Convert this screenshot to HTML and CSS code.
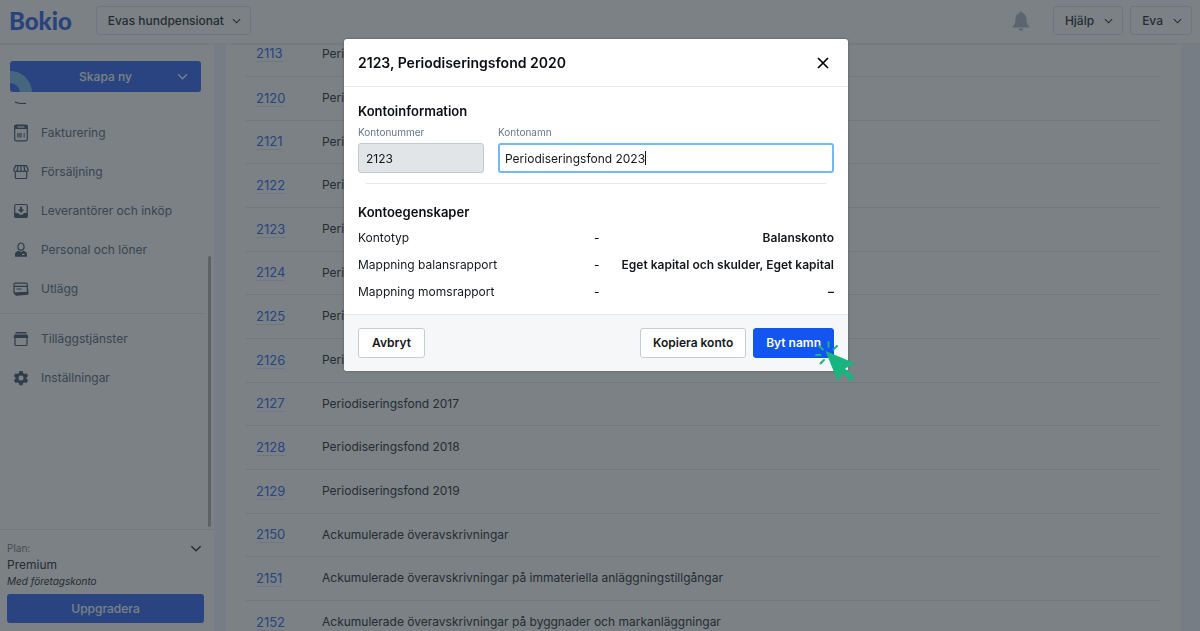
FILE: index.html
```html
<!DOCTYPE html>
<html lang="sv">

<head>
    <meta charset="UTF-8">
    <meta name="viewport" content="width=device-width, initial-scale=1.0">
    <title>Bokio - Kontoplan</title>
    <link rel="stylesheet" href="styles.css">
</head>

<body>

    <header class="topbar">
        <a class="logo" href="#">Bokio</a>
        <button class="top-button company">Evas hundpensionat
            <svg class="chevron" viewBox="0 0 10 6"><path d="M1 1l4 4 4-4" /></svg>
        </button>
        <button class="bell" aria-label="Notiser">
            <svg width="18" height="20" viewBox="0 0 18 20"><path d="M9 .5a1.300 1.300 0 0 1 1.300 1.400C13 2.500 14.500 5 14.500 8c0 4 .8 5.500 2.600 7.200V16.500H.9V15.200C2.700 13.500 3.500 12 3.500 8c0-3 1.500-5.500 4.200-6.100A1.300 1.300 0 0 1 9 .5zM6.800 17.500h4.400a2.200 2.200 0 0 1-4.400 0z" /></svg>
        </button>
        <button class="top-button">Hjälp
            <svg class="chevron" viewBox="0 0 10 6"><path d="M1 1l4 4 4-4" /></svg>
        </button>
        <button class="top-button">Eva
            <svg class="chevron" viewBox="0 0 10 6"><path d="M1 1l4 4 4-4" /></svg>
        </button>
    </header>

    <div class="layout">
        <aside class="sidebar">
            <button class="create">
                <svg class="create-arc" width="24" height="21" viewBox="0 0 24 21"><circle cx="0" cy="22" r="16" /></svg>
                <span>Skapa ny</span>
                <svg class="chevron" viewBox="0 0 10 6"><path d="M1 1l4 4 4-4" /></svg>
            </button>

            <nav class="menu">
                <svg class="cut-icon" width="12" height="4" viewBox="0 0 12 4"><path d="M0 1l5 1.500 6-.2" /></svg>
                <a href="#">
                    <svg viewBox="0 0 16 18"><rect class="line" x="1.700" y="1.200" width="12.600" height="15.600" rx="1.500" /><path d="M1.500 1h13v4h-13z" /><path class="cut" d="M4.500 3h7" /><path class="soft" d="M4 9h5v4.500H4zM10.500 9H12v4.500h-1.500z" /></svg>
                    Fakturering
                </a>
                <a href="#">
                    <svg viewBox="0 0 16 18"><path class="line" d="M2.300 8.500v6a1 1 0 0 0 1 1h9.400a1 1 0 0 0 1-1v-6M2.500 2.700h11l1.700 4.200c0 2.200-3.400 2.200-3.600 0 0 2.200-3.600 2.200-3.600 0 0 2.200-3.600 2.200-3.600 0C4.200 9.100.8 9.100.8 6.900zM5 2.700l-.6 4.200M8 2.700v4.200M11 2.700l.6 4.200" /></svg>
                    Försäljning
                </a>
                <a href="#">
                    <svg viewBox="0 0 16 18"><rect class="line" x="1.700" y="2.500" width="12.600" height="12.800" rx="1.500" /><path d="M1.500 11h3.700c.6 2.400 5 2.400 5.600 0h3.700v4.800h-13zM7 4.800h2v2.700h2.200L8 11 4.800 7.500H7z" /></svg>
                    Leverantörer och inköp
                </a>
                <a href="#">
                    <svg viewBox="0 0 16 18"><path class="line" d="M4.900 6.200c-.3-5.600 6.500-5.600 6.200 0-.3 4-5.900 4-6.200 0z" /><path d="M2 15.800v-2.300c0-2 1.500-3.300 3.600-3.700 1.500 1.200 3.300 1.200 4.800 0 2.100.4 3.600 1.700 3.600 3.700v2.300z" /><path class="cut" d="M9 13.500h2.500" /></svg>
                    Personal och löner
                </a>
                <a href="#">
                    <svg viewBox="0 0 16 18"><path class="line" d="M2 3.200h11a1.300 1.300 0 0 1 1.300 1.300v7.800L2.600 13.500a1.500 1.500 0 0 1-1.600-1.400V4.500a1.300 1.300 0 0 1 1-1.300zM1 6.300h13.300M3.500 9h5" /><path d="M1 12.500l14-.8V7l.6 6.500c0 1-.6 1.300-1.600 1.300l-10 .9c-1.500.1-2.600-.6-3-3.200z" /></svg>
                    Utlägg
                </a>
                <hr>
                <a href="#">
                    <svg viewBox="0 0 16 18"><path d="M2.500 2h11v1.600h-11zM1.500 4.500h13l1 3.500H.5z" /><path class="line" d="M2 7.500v7a1 1 0 0 0 1 1h10a1 1 0 0 0 1-1v-7" /></svg>
                    Tilläggstjänster
                </a>
                <a href="#">
                    <svg viewBox="0 0 16 18"><path fill-rule="evenodd" d="M6.400 2h3.200l.5 2.100 1.300.8 2.100-.7 1.600 2.800L13.500 8.400v1.400l1.600 1.400-1.600 2.800-2.100-.6-1.300.7-.5 2.100H6.400l-.5-2.100-1.300-.7-2.100.6L.9 11.200l1.600-1.400V8.400L.9 7l1.600-2.800 2.100.7 1.300-.8zM8 6.600a2.500 2.500 0 1 0 0 5 2.500 2.500 0 0 0 0-5z" /></svg>
                    Inställningar
                </a>
                <div class="scroll-thumb"></div>
            </nav>

            <section class="plan">
                <div class="plan-head">Plan:
                    <svg class="chevron" viewBox="0 0 10 6"><path d="M1 1l4 4 4-4" /></svg>
                </div>
                <div class="plan-name">Premium</div>
                <em>Med företagskonto</em>
                <button class="upgrade">Uppgradera</button>
            </section>
        </aside>

        <main class="content">
            <table class="accounts">
                <tbody>
                    <tr><td><a href="#">2113</a></td><td>Periodiseringsfond 2013</td></tr>
                    <tr><td><a href="#">2120</a></td><td>Periodiseringsfond 2020</td></tr>
                    <tr><td><a href="#">2121</a></td><td>Periodiseringsfond 2021</td></tr>
                    <tr><td><a href="#">2122</a></td><td>Periodiseringsfond 2022</td></tr>
                    <tr><td><a href="#">2123</a></td><td>Periodiseringsfond 2020</td></tr>
                    <tr><td><a href="#">2124</a></td><td>Periodiseringsfond 2014</td></tr>
                    <tr><td><a href="#">2125</a></td><td>Periodiseringsfond 2015</td></tr>
                    <tr><td><a href="#">2126</a></td><td>Periodiseringsfond 2016</td></tr>
                    <tr><td><a href="#">2127</a></td><td>Periodiseringsfond 2017</td></tr>
                    <tr><td><a href="#">2128</a></td><td>Periodiseringsfond 2018</td></tr>
                    <tr><td><a href="#">2129</a></td><td>Periodiseringsfond 2019</td></tr>
                    <tr><td><a href="#">2150</a></td><td>Ackumulerade överavskrivningar</td></tr>
                    <tr><td><a href="#">2151</a></td><td>Ackumulerade överavskrivningar på immateriella anläggningstillgångar</td></tr>
                    <tr><td><a href="#">2152</a></td><td>Ackumulerade överavskrivningar på byggnader och markanläggningar</td></tr>
                </tbody>
            </table>
        </main>
    </div>

    <div class="modal-overlay">
        <form class="modal" role="dialog" aria-labelledby="modalTitle">
            <div class="modal-header">
                <h1 id="modalTitle">2123, Periodiseringsfond 2020</h1>
                <button type="button" class="close-modal" aria-label="Stäng">
                    <svg width="12" height="12" viewBox="0 0 12 12"><path d="M1 1l10 10M11 1L1 11" /></svg>
                </button>
            </div>

            <div class="modal-body">
                <h2>Kontoinformation</h2>
                <div class="fields">
                    <div class="field">
                        <label for="kontonummer">Kontonummer</label>
                        <input type="text" id="kontonummer" value="2123" disabled>
                    </div>
                    <div class="field">
                        <label for="kontonamn">Kontonamn</label>
                        <input type="text" id="kontonamn" class="active" value="Periodiseringsfond 2023">
                        <span class="caret"></span>
                    </div>
                </div>
                <hr>
                <h2>Kontoegenskaper</h2>
                <div class="property"><span>Kontotyp</span><span>-</span><b>Balanskonto</b></div>
                <div class="property"><span>Mappning balansrapport</span><span>-</span><b>Eget kapital och skulder, Eget kapital</b></div>
                <div class="property"><span>Mappning momsrapport</span><span>-</span><b>–</b></div>
            </div>

            <div class="modal-footer">
                <button type="button">Avbryt</button>
                <button type="button" class="copy">Kopiera konto</button>
                <button type="submit" class="primary">Byt namn</button>
                <svg class="pointer" width="42" height="42" viewBox="0 0 42 42">
                    <path class="rays" d="M14.500 2v5M23 6l-3.500 3.500M2 15h4.500M6.500 23.500l3.500-3.500M5 6l4 3.500" />
                    <path d="M11.500 11l30 12.500-10.500 5 9.500 8.500-4 4-8.500-8.500-4 9.500z" />
                </svg>
            </div>
        </form>
    </div>

</body>

</html>
```
FILE: styles.css
```css
* {
    box-sizing: border-box;
}

body {
    font-family: Inter, Arial, sans-serif;
    font-size: 12px;
    line-height: 16px;
    margin: 0;
    height: 100vh;
    display: flex;
    flex-direction: column;
    overflow: hidden;
    background: #f6f6ff;
    color: #3c4048;
}

button,
input {
    font: inherit;
    color: inherit;
}

button {
    cursor: pointer;
}

a {
    text-decoration: none;
}

.chevron {
    width: 9px;
    height: 6px;
    fill: none;
    stroke: currentColor;
    stroke-width: 1.2;
}

/* top bar */
.topbar {
    display: flex;
    align-items: center;
    height: 45px;
    flex-shrink: 0;
    padding: 0 8px 2px 9px;
    gap: 7px;
    background: #fff;
    border-bottom: 2px solid #f2f4f6;
    z-index: 1;
}

.logo {
    font-family: Lato, sans-serif;
    font-size: 24px;
    line-height: 28px;
    font-weight: 900;
    color: #4070ee;
    margin-right: 17px;
}

.top-button {
    display: flex;
    align-items: center;
    gap: 10px;
    height: 29px;
    padding: 0 9px 0 11px;
    background: none;
    border: 1px solid #e6e8ec;
    border-radius: 3px;
    font-weight: 500;
}

.company {
    gap: 8px;
}

.bell {
    margin-left: auto;
    margin-right: 16px;
    padding: 0;
    border: none;
    background: none;
    display: flex;
    fill: #b4bfd0;
}

.layout {
    display: flex;
    flex: 1;
    min-height: 0;
}

/* sidebar */
.sidebar {
    display: flex;
    flex-direction: column;
    width: 214px;
    flex-shrink: 0;
    background: #fff;
    padding-top: 16px;
}

.create {
    position: relative;
    display: flex;
    align-items: center;
    height: 31px;
    flex-shrink: 0;
    margin: 0 13px 0 10px;
    padding: 0 13px 0 24px;
    border: none;
    border-radius: 3px;
    background: #4475f5;
    color: #fff;
    font-weight: 500;
    overflow: hidden;
}

.create span {
    flex: 1;
}

.create .chevron {
    width: 11px;
    height: 7px;
}

.create-arc {
    position: absolute;
    left: 0;
    bottom: 0;
    fill: none;
    stroke: #86c1f0;
    stroke-width: 12;
}

.menu {
    position: relative;
    flex: 1;
    min-height: 0;
    display: flex;
    flex-direction: column;
    padding-top: 9px;
}

.menu a {
    display: flex;
    align-items: center;
    gap: 12px;
    height: 39px;
    flex-shrink: 0;
    padding-left: 13px;
    color: #69778f;
}

.menu a svg {
    width: 16px;
    height: 18px;
    fill: #56647c;
}

.menu a .line {
    fill: none;
    stroke: #56647c;
    stroke-width: 1.2;
}

.menu a .cut {
    fill: none;
    stroke: #fff;
    stroke-width: 1.2;
}

.menu a .soft {
    fill: #96a2b4;
}

.cut-icon {
    flex-shrink: 0;
    margin-left: 15px;
    margin-bottom: 8px;
    fill: none;
    stroke: #56647c;
    stroke-width: 1.2;
}

.menu hr {
    width: 204px;
    margin: 5px 0;
    border: none;
    border-top: 1px solid #eaedf0;
}

.scroll-thumb {
    position: absolute;
    right: 3px;
    top: 164px;
    bottom: 2px;
    width: 3px;
    border-radius: 2px;
    background: #b9b9b9;
}

.plan {
    display: flex;
    flex-direction: column;
    border-top: 1px solid #eaedf0;
    padding: 10px 10px 8px 7px;
}

.plan-head {
    display: flex;
    justify-content: space-between;
    align-items: center;
    padding-right: 2px;
    font-size: 10px;
    color: #858b98;
}

.plan-head .chevron {
    width: 12px;
    height: 7px;
    color: #3c4048;
}

.plan-name {
    line-height: 18px;
}

.plan em {
    font-size: 10px;
    line-height: 14px;
}

.upgrade {
    height: 29px;
    margin-top: 6px;
    border: none;
    border-radius: 3px;
    background: #4475f5;
    color: #fff;
    font-weight: 500;
}

/* account list */
.content {
    flex: 1;
    margin-left: 12px;
    margin-right: 19px;
    padding: 0 20px;
    background: #fff;
    overflow: hidden;
}

/* list is scrolled a bit, so the first row slides in under the top bar */
.accounts {
    width: 100%;
    margin-top: -13px;
    border-collapse: collapse;
}

.accounts tr {
    height: 44px;
}

.accounts tr:nth-child(3n) {
    height: 43px;
}

.accounts td {
    padding: 0;
    border-bottom: 1px solid #eaedf0;
}

.accounts td:first-child {
    width: 76px;
    padding-left: 10px;
}

.accounts a {
    font-size: 13px;
    color: #4475f5;
    border-bottom: 1px solid #e4eaf8;
}

/* modal */
.modal-overlay {
    position: fixed;
    inset: 0;
    z-index: 2;
    display: flex;
    justify-content: center;
    align-items: flex-start;
    padding: 39px 8px 0 0;
    background: rgba(20, 30, 35, 0.56);
}

.modal {
    width: 504px;
    max-width: 100%;
    background: #fff;
    border-radius: 3px;
    color: #14181d;
    box-shadow: 0 0 3px rgba(0, 0, 0, 0.3);
}

.modal-header {
    display: flex;
    justify-content: space-between;
    align-items: center;
    height: 48px;
    padding: 0 19px 0 14px;
    border-bottom: 1px solid #e6e8ea;
}

h1,
h2 {
    margin: 0;
    font-size: 13px;
    line-height: 16px;
    font-weight: 600;
    color: #0b0e12;
}

h1 {
    font-size: 14px;
}

.close-modal {
    display: flex;
    padding: 0;
    border: none;
    background: none;
    stroke: #000;
    stroke-width: 1.7;
}

.modal-body {
    padding: 16px 14px 8px;
}

.fields {
    display: flex;
    gap: 14px;
    margin-top: 6px;
}

.field {
    position: relative;
    width: 126px;
}

.field + .field {
    flex: 1;
}

.field label {
    display: block;
    font-size: 10px;
    line-height: 14px;
    margin-bottom: 4px;
    color: #66788a;
}

.field input {
    display: block;
    width: 100%;
    height: 30px;
    padding: 0 7px;
    border: 1px solid #c3cace;
    border-radius: 3px;
    background: #fff;
    outline: none;
}

.field input:disabled {
    background: #e1e5e8;
}

.field input.active {
    padding: 0 5px;
    border: 2px solid #74b8f5;
}

.caret {
    position: absolute;
    left: 147px;
    bottom: 8px;
    width: 1px;
    height: 14px;
    background: #14181d;
}

.modal-body hr {
    margin: 10px 8px 20px;
    border: none;
    border-top: 1px solid #e3e7ea;
}

.property {
    display: grid;
    grid-template-columns: 236px 1fr auto;
    padding: 5px 0 6px;
}

.property b {
    font-weight: 600;
}

h2 + .property {
    padding-top: 10px;
}

.modal-footer {
    position: relative;
    display: flex;
    gap: 7px;
    padding: 13px 14px;
    border-top: 1px solid #e3e7ea;
    border-radius: 0 0 3px 3px;
    background: #f5f7f9;
}

.modal-footer button {
    height: 30px;
    padding: 0 13px;
    border: 1px solid #c6cdd2;
    border-radius: 3px;
    background: #fff;
    font-weight: 600;
}

.modal-footer .copy {
    margin-left: auto;
}

.modal-footer .copy,
.modal-footer .primary {
    padding: 0 12px;
}

.modal-footer .primary {
    background: #1355f0;
    border-color: #1355f0;
    color: #fff;
}

/* click marker on top of the primary button */
.pointer {
    position: absolute;
    right: -8px;
    bottom: -11px;
    fill: #17b57f;
}

.pointer .rays {
    fill: none;
    stroke: #17b57f;
    stroke-width: 2;
    stroke-linecap: round;
}
```
